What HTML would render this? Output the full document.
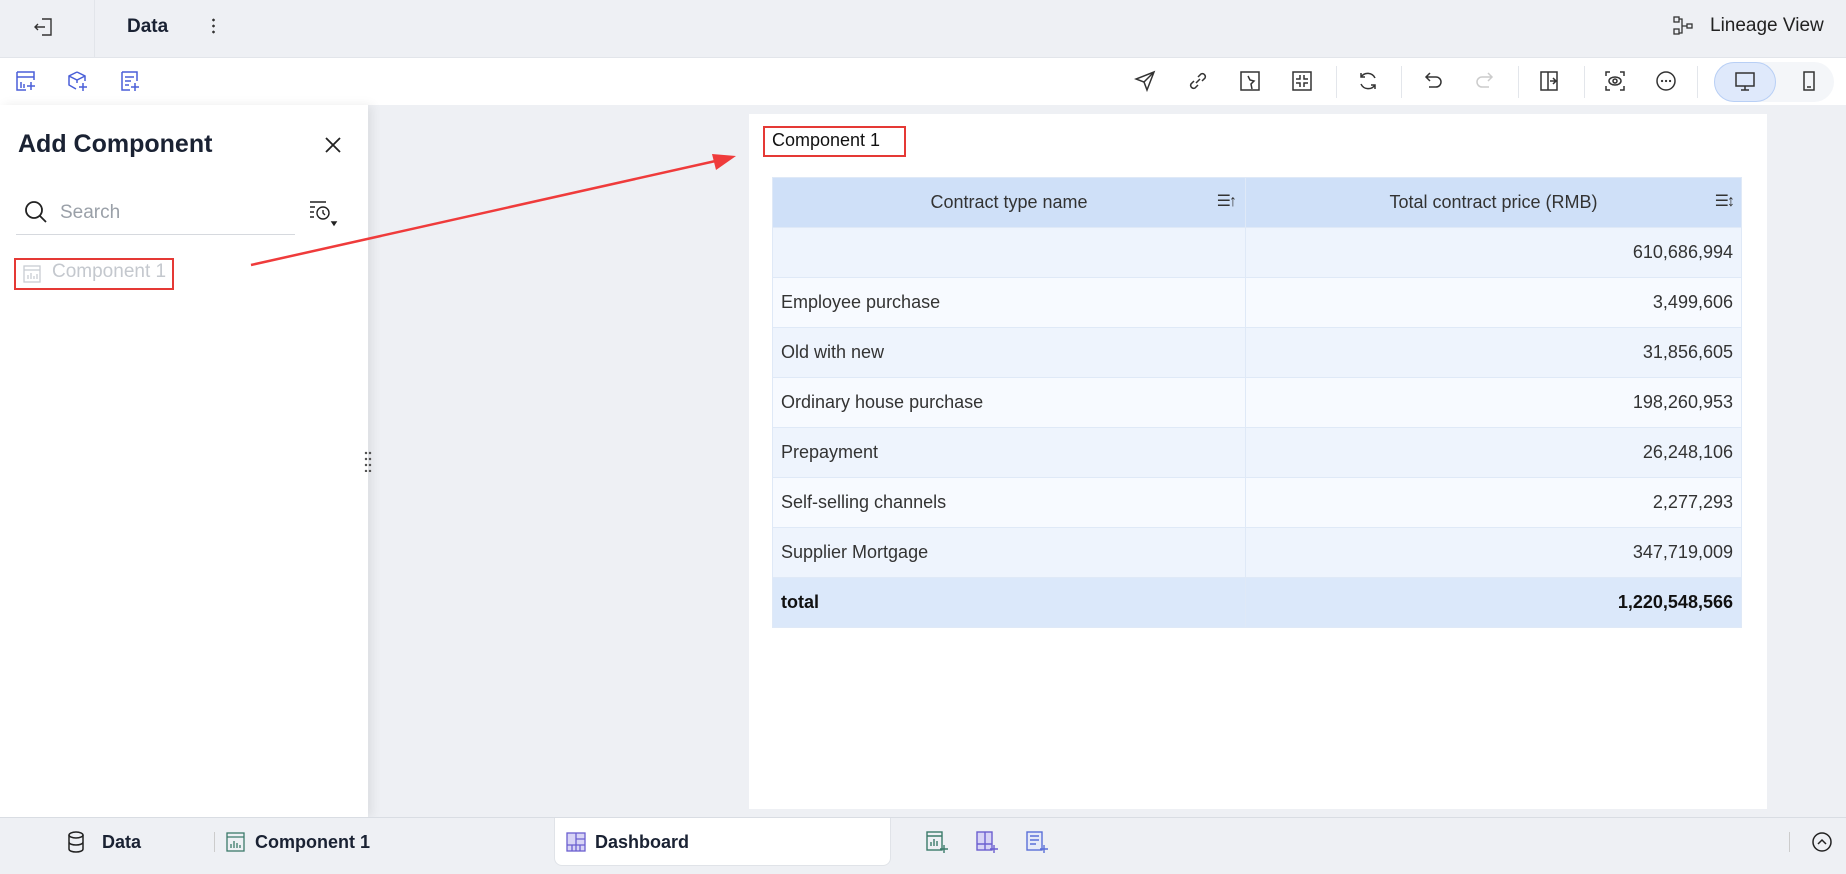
<!DOCTYPE html>
<html><head><meta charset="utf-8"><style>
*{box-sizing:border-box;margin:0;padding:0}
body{width:1846px;height:874px;overflow:hidden;background:#eef0f4;font-family:"Liberation Sans",Arial,sans-serif;position:relative;color:#1f2937}
.a{position:absolute}
svg{display:block}
.top{left:0;top:0;width:1846px;height:58px;background:#eef0f4;border-bottom:1px solid #e2e5ea}
.tb{left:0;top:58px;width:1846px;height:47px;background:#fff}
.ic{position:absolute;top:70px}
.sep{position:absolute;top:66px;width:1px;height:32px;background:#e3e6eb}
.panel{left:0;top:105px;width:368px;height:712px;background:#fff;box-shadow:4px 0 10px rgba(0,0,0,.08)}
.card{left:749px;top:114px;width:1018px;height:695px;background:#fff}
table{border-collapse:collapse;position:absolute;left:772px;top:177px;width:970px;font-size:18px;color:#333}
td{height:50px;padding:0 8px;border:1px solid #dfe9f7}
td.r{text-align:right}
.srt{position:absolute;top:13px;font-size:16px;letter-spacing:-2px}
.bot{left:0;top:817px;width:1846px;height:57px;background:#eef0f4;border-top:1px solid #d9dde3}
</style></head><body>
<div class="a top"></div>
<div class="a" style="left:94px;top:0;width:1px;height:58px;background:#e2e5ea"></div>
<svg class="a" style="left:33px;top:16px" width="22" height="22" viewBox="0 0 22 22" fill="none" stroke="#333" stroke-width="1.4"><path d="M9 3h9v16H9M2 11h10M5 8l-3 3 3 3"/></svg>
<div class="a" style="left:127px;top:16px;font-size:19px;font-weight:bold;color:#1a2233">Data</div>
<div class="a" style="left:212px;top:17px;width:3px;height:18px;background:radial-gradient(circle,#333 1.2px,transparent 1.5px) 0 0/3px 6px"></div>
<svg class="a" style="left:1672px;top:15px" width="22" height="22" viewBox="0 0 22 22" fill="none" stroke="#333" stroke-width="1.3"><rect x="2" y="2" width="5" height="5"/><rect x="2" y="14" width="5" height="5"/><rect x="15" y="9" width="5" height="4"/><path d="M7 4h3v14H7M10 11h5"/></svg>
<div class="a" style="left:1710px;top:15px;font-size:19px;color:#222">Lineage View</div>

<div class="a tb"></div>
<svg class="ic" style="left:15px" width="22" height="22" viewBox="0 0 22 22" fill="none" stroke="#4a5fd8" stroke-width="1.5"><path d="M2 2h17v8M2 2v18h9M2 7h17M6 12v6M9 14v4M16 12v8M12 16h8"/></svg>
<svg class="ic" style="left:67px" width="22" height="22" viewBox="0 0 22 22" fill="none" stroke="#4a5fd8" stroke-width="1.5"><path d="M10 2l8 4v5M10 2L2 6v9l7 4M2 6l8 4 8-4M10 10v3M16 13v8M12 17h8"/></svg>
<svg class="ic" style="left:119px" width="22" height="22" viewBox="0 0 22 22" fill="none" stroke="#4a5fd8" stroke-width="1.5"><path d="M3 2h15v9M3 2v18h8M6 7h9M6 11h6M6 15h4M16 13v8M12 17h8"/></svg>

<svg class="ic" style="left:1134px" width="22" height="22" viewBox="0 0 22 22" fill="none" stroke="#333" stroke-width="1.5"><path d="M20 2L2 9l8 3 3 8z M10 12l10-10"/></svg>
<svg class="ic" style="left:1187px" width="22" height="22" viewBox="0 0 22 22" fill="none" stroke="#333" stroke-width="1.5"><path d="M9 13l4-4M7 11l-3 3a3 3 0 004 4l3-3M15 11l3-3a3 3 0 00-4-4l-3 3"/></svg>
<svg class="ic" style="left:1239px" width="22" height="22" viewBox="0 0 22 22" fill="none" stroke="#333" stroke-width="1.5"><rect x="2" y="2" width="18" height="18"/><path d="M9 6l2 4 4 1-3 3 1 5"/></svg>
<svg class="ic" style="left:1291px" width="22" height="22" viewBox="0 0 22 22" fill="none" stroke="#333" stroke-width="1.5"><rect x="2" y="2" width="18" height="18"/><path d="M9 5v4H5M13 5v4h4M9 17v-4H5M13 17v-4h4"/></svg>
<div class="sep" style="left:1336px"></div>
<svg class="ic" style="left:1357px" width="22" height="22" viewBox="0 0 22 22" fill="none" stroke="#333" stroke-width="1.5"><path d="M18 8A8 8 0 004 7M4 14a8 8 0 0014 1M4 3v4h4M18 19v-4h-4"/></svg>
<div class="sep" style="left:1401px"></div>
<svg class="ic" style="left:1423px" width="22" height="22" viewBox="0 0 22 22" fill="none" stroke="#333" stroke-width="1.5"><path d="M7 3L3 7l4 4M3 7h10a5 5 0 010 10H6"/></svg>
<svg class="ic" style="left:1473px" width="22" height="22" viewBox="0 0 22 22" fill="none" stroke="#ccc" stroke-width="1.5"><path d="M15 3l4 4-4 4M19 7H9a5 5 0 000 10h7"/></svg>
<div class="sep" style="left:1518px"></div>
<svg class="ic" style="left:1538px" width="22" height="22" viewBox="0 0 22 22" fill="none" stroke="#333" stroke-width="1.5"><path d="M10 2H3v18h7V2h9v18h-9M12 11h6M15 8l3 3-3 3"/></svg>
<div class="sep" style="left:1584px"></div>
<svg class="ic" style="left:1604px" width="22" height="22" viewBox="0 0 22 22" fill="none" stroke="#333" stroke-width="1.5"><path d="M2 6V2h4M16 2h4v4M20 16v4h-4M6 20H2v-4"/><ellipse cx="11" cy="11" rx="6" ry="4"/><circle cx="11" cy="11" r="2"/></svg>
<svg class="ic" style="left:1655px" width="22" height="22" viewBox="0 0 22 22" fill="none" stroke="#333" stroke-width="1.5"><circle cx="11" cy="11" r="9"/><path d="M7 11h.1M11 11h.1M15 11h.1" stroke-width="2.2" stroke-linecap="round"/></svg>
<div class="sep" style="left:1697px"></div>
<div class="a" style="left:1714px;top:62px;width:120px;height:40px;border-radius:20px;background:#f4f6f9"></div>
<div class="a" style="left:1714px;top:62px;width:62px;height:40px;border-radius:20px;background:#dfe9fb;border:1px solid #b8cff5"></div>
<svg class="ic" style="left:1734px" width="22" height="22" viewBox="0 0 22 22" fill="none" stroke="#333" stroke-width="1.5"><rect x="2" y="3" width="18" height="13"/><path d="M11 16v4M7 20h8"/></svg>
<svg class="ic" style="left:1798px" width="22" height="22" viewBox="0 0 22 22" fill="none" stroke="#333" stroke-width="1.5"><rect x="6" y="2" width="10" height="18"/><path d="M9 17h4"/></svg>

<div class="a card"></div>
<div class="a" style="left:763px;top:126px;width:143px;height:31px;border:2px solid #e53935"></div>
<div class="a" style="left:772px;top:130px;font-size:18px;color:#111">Component 1</div>
<table>
<tr style="background:#cfe0f8"><td style="width:473px;height:47px;text-align:center;position:relative">Contract type name<span class="srt" style="right:10px">☰↑</span></td><td style="text-align:center;position:relative">Total contract price (RMB)<span class="srt" style="right:8px">☰↕</span></td></tr>
<tr style="background:#eef4fd"><td></td><td class="r">610,686,994</td></tr>
<tr style="background:#f7faff"><td>Employee purchase</td><td class="r">3,499,606</td></tr>
<tr style="background:#eef4fd"><td>Old with new</td><td class="r">31,856,605</td></tr>
<tr style="background:#f7faff"><td>Ordinary house purchase</td><td class="r">198,260,953</td></tr>
<tr style="background:#eef4fd"><td>Prepayment</td><td class="r">26,248,106</td></tr>
<tr style="background:#f7faff"><td>Self-selling channels</td><td class="r">2,277,293</td></tr>
<tr style="background:#eef4fd"><td>Supplier Mortgage</td><td class="r">347,719,009</td></tr>
<tr style="background:#dbe8fa;font-weight:bold;color:#111"><td>total</td><td class="r">1,220,548,566</td></tr>
</table>

<div class="a panel"></div>
<div class="a" style="left:18px;top:130px;font-size:25px;font-weight:bold;color:#1a2233">Add Component</div>
<svg class="a" style="left:323px;top:135px" width="20" height="20" viewBox="0 0 20 20" stroke="#222" stroke-width="1.8"><path d="M3 3l14 14M17 3L3 17"/></svg>
<svg class="a" style="left:24px;top:200px" width="24" height="24" viewBox="0 0 24 24" fill="none" stroke="#222" stroke-width="1.8"><circle cx="10" cy="10" r="8"/><path d="M16 16l6 6"/></svg>
<div class="a" style="left:60px;top:202px;font-size:19px;color:#9aa0a8">Search</div>
<div class="a" style="left:16px;top:234px;width:279px;height:1px;background:#d6d9de"></div>
<svg class="a" style="left:309px;top:200px" width="30" height="30" viewBox="0 0 30 30" fill="none" stroke="#222" stroke-width="1.4"><path d="M1 2h16M1 7h5M1 12h4M1 17h4"/><circle cx="14" cy="13" r="6"/><path d="M14 10v3l2 2"/><path d="M27 22l-2 3-2-3z" fill="#222"/></svg>
<div class="a" style="left:14px;top:258px;width:160px;height:32px;border:2px solid #e53935"></div>
<svg class="a" style="left:23px;top:265px" width="18" height="18" viewBox="0 0 18 18" fill="none" stroke="#c8ccd2" stroke-width="1.3"><rect x="1" y="1" width="16" height="16"/><path d="M1 5h16M5 14v-4M8 14V8M11 14v-3M14 14V9"/></svg>
<div class="a" style="left:52px;top:261px;font-size:19px;color:#c4c8ce">Component 1</div>
<div class="a" style="left:364px;top:450px;width:8px;height:22px;background:radial-gradient(circle,#555 1.1px,transparent 1.4px) 0 0/4px 6px"></div>

<svg class="a" style="left:0;top:0" width="1846" height="874" viewBox="0 0 1846 874"><path d="M251 265L720 160" stroke="#ef3b3b" stroke-width="2.5"/><path d="M736 156L712 154 716 170z" fill="#ef3b3b"/></svg>

<div class="a bot"></div>
<div class="a" style="left:554px;top:818px;width:337px;height:48px;background:#fff;border-radius:0 0 8px 8px;border:1px solid #e0e3e8;border-top:none"></div>
<svg class="a" style="left:66px;top:831px" width="20" height="22" viewBox="0 0 20 22" fill="none" stroke="#222" stroke-width="1.5"><ellipse cx="10" cy="4" rx="7" ry="3"/><path d="M3 4v14c0 4 14 4 14 0V4M3 11c0 4 14 4 14 0"/></svg>
<div class="a" style="left:102px;top:832px;font-size:18px;font-weight:bold;color:#1a2233">Data</div>
<div class="a" style="left:214px;top:832px;width:1px;height:20px;background:#ccc"></div>
<svg class="a" style="left:226px;top:832px" width="19" height="20" viewBox="0 0 19 20" fill="none" stroke="#3b7a6a" stroke-width="1.3"><rect x="1" y="1" width="17" height="18"/><path d="M1 5h17M5 16v-4M8 16V9M11 16v-5M14 16v-3"/></svg>
<div class="a" style="left:255px;top:832px;font-size:18px;font-weight:bold;color:#1a2233">Component 1</div>
<svg class="a" style="left:566px;top:832px" width="20" height="20" viewBox="0 0 20 20" fill="#d8d4f6" stroke="#6b5fd0" stroke-width="1.3"><rect x="1" y="1" width="18" height="18"/><path d="M1 13h18M10 1v18M6 13v6M14 13v6M10 7h9"/></svg>
<div class="a" style="left:595px;top:832px;font-size:18px;font-weight:bold;color:#1a2233">Dashboard</div>
<svg class="a" style="left:925px;top:830px" width="24" height="24" viewBox="0 0 24 24" fill="none" stroke="#3b7a6a" stroke-width="1.4"><rect x="2" y="2" width="15" height="18"/><path d="M2 6h15M6 16v-4M9 16V9M12 16v-5M19 15v8M15 19h8"/></svg>
<svg class="a" style="left:975px;top:830px" width="24" height="24" viewBox="0 0 24 24" fill="#d8d4f6" stroke="#6b5fd0" stroke-width="1.4"><rect x="2" y="2" width="15" height="18"/><path d="M2 14h15M10 2v18"/><path d="M19 15v8M15 19h8" fill="none"/></svg>
<svg class="a" style="left:1025px;top:830px" width="24" height="24" viewBox="0 0 24 24" fill="#e6eaf8" stroke="#5a6fd8" stroke-width="1.4"><rect x="2" y="2" width="15" height="18"/><path d="M5 6h9M5 10h9M5 14h6M19 15v8M15 19h8" fill="none"/></svg>
<div class="a" style="left:1789px;top:832px;width:1px;height:20px;background:#ccc"></div>
<svg class="a" style="left:1811px;top:831px" width="22" height="22" viewBox="0 0 22 22" fill="none" stroke="#222" stroke-width="1.5"><circle cx="11" cy="11" r="9"/><path d="M7 13l4-4 4 4"/></svg>
</body></html>
